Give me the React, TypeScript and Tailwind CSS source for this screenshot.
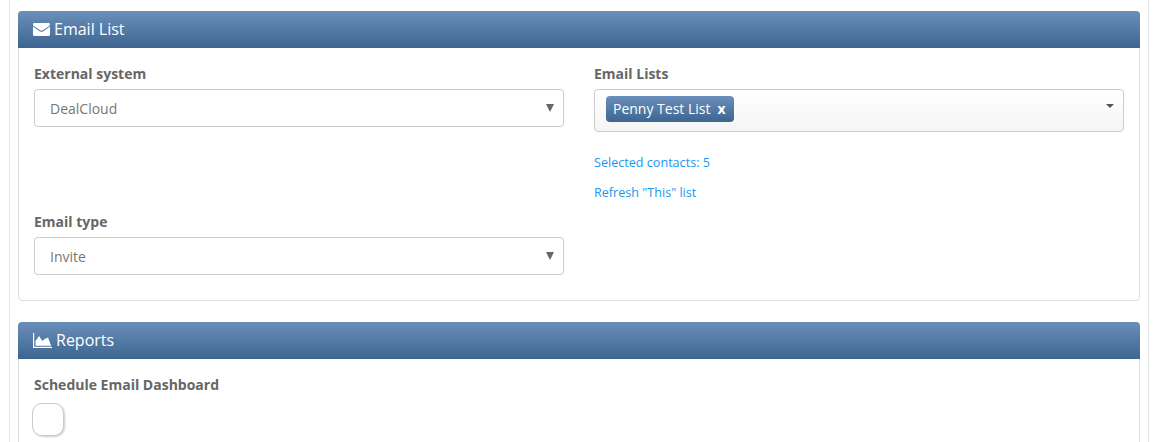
import React from "react";

const font = { fontFamily: '"Open Sans", sans-serif' };

function MailIcon() {
  return (
    <svg width="17" height="13" viewBox="0 0 17 13" className="shrink-0">
      <path d="M1.4 0h14.2c.7 0 1.4.6 1.4 1.3 0 .8-.6 1.500-1.200 2L9.400 7.600c-.5.3-1.300.3-1.800 0L1.200 3.300C.6 2.900 0 2.100 0 1.400 0 .6.6 0 1.400 0z" fill="#fff" />
      <path d="M0 3.600l7 4.800c.9.6 2.100.6 3 0l7-4.800v7.900c0 .8-.6 1.500-1.400 1.500H1.400C.6 13 0 12.300 0 11.500z" fill="#fff" />
    </svg>
  );
}

function AreaIcon() {
  return (
    <svg width="19" height="15" viewBox="0 0 19 15" className="shrink-0">
      <path d="M0 0h1.200v13.800H19V15H0z" fill="#fff" />
      <path d="M2.500 12.800V8L6 3l3.500 5 2.200-2 3.300-1.500 3.200 8.300z" fill="#fff" />
    </svg>
  );
}

function Panel({ icon, title, children }: { icon: React.ReactNode; title: string; children: React.ReactNode }) {
  return (
    <section className="rounded-[4px] border border-[#dddddd] bg-white">
      <div className="-mx-px -mt-px flex h-[37px] items-center gap-[4px] rounded-t-[4px] bg-gradient-to-b from-[#6a8fbb] to-[#3e6591] pl-[15px] text-[16px] text-white">
        {icon}
        <span className="-mt-[2px]">{title}</span>
      </div>
      {children}
    </section>
  );
}

function Field({ label, value, className }: { label: string; value: string; className?: string }) {
  return (
    <div className={className}>
      <div className="text-[14px] font-bold leading-[20px] text-[#666666]">{label}</div>
      <div className="mt-[5px] flex h-[38px] items-center justify-between rounded-[4px] border border-[#cccccc] bg-white pl-[15px] pr-[9px] text-[14px] text-[#777777]">
        <span>{value}</span>
        <span className="h-0 w-0 border-x-[4px] border-t-[8px] border-x-transparent border-t-[#666666]" />
      </div>
    </div>
  );
}

export default function App() {
  return (
    <div className="h-[442px] overflow-hidden bg-white" style={font}>
      <div className="ml-[9px] mr-[8px] h-full border-x border-[#e5e5e5] px-[8px] pt-[11px]">
        <Panel icon={<MailIcon />} title="Email List">
          <div className="grid h-[252px] grid-cols-2 gap-x-[30px] px-[15px] pt-[16px]">
            <div>
              <Field label="External system" value="DealCloud" />
              <Field label="Email type" value="Invite" className="mt-[85px]" />
            </div>
            <div>
              <div className="text-[14px] font-bold leading-[20px] text-[#666666]">Email Lists</div>
              <div className="mt-[5px] flex h-[43px] items-start justify-between rounded-[4px] border border-[#cccccc] bg-gradient-to-b from-white to-[#f5f5f5] pl-[11px] pr-[9px] pt-[6px]">
                <span className="flex h-[26px] items-center gap-[7px] rounded-[4px] bg-gradient-to-b from-[#6a8fbb] to-[#3e6591] pb-px pl-[7px] pr-[8px] text-[14px] text-white">
                  Penny Test List
                  <span className="text-[14px] font-bold">x</span>
                </span>
                <span className="mt-[8px] h-0 w-0 border-x-[4.5px] border-t-[4px] border-x-transparent border-t-[#555555]" />
              </div>
              <div className="mt-[22px] text-[12.6px] leading-[18px] text-[#2196f3]">Selected contacts: 5</div>
              <div className="mt-[12px] text-[12.6px] leading-[18px] text-[#2196f3]">Refresh "This" list</div>
            </div>
          </div>
        </Panel>
        <div className="mt-[21px]">
          <Panel icon={<AreaIcon />} title="Reports">
            <div className="h-[200px] px-[15px] pt-[16px]">
              <div className="text-[14px] font-bold leading-[20px] text-[#666666]">Schedule Email Dashboard</div>
              <div className="-ml-[2px] mt-[8px] h-[33px] w-[32px] rounded-[10px] border border-[#cccccc] bg-white shadow-[1px_1px_2px_rgba(0,0,0,0.2)]" />
            </div>
          </Panel>
        </div>
      </div>
    </div>
  );
}
